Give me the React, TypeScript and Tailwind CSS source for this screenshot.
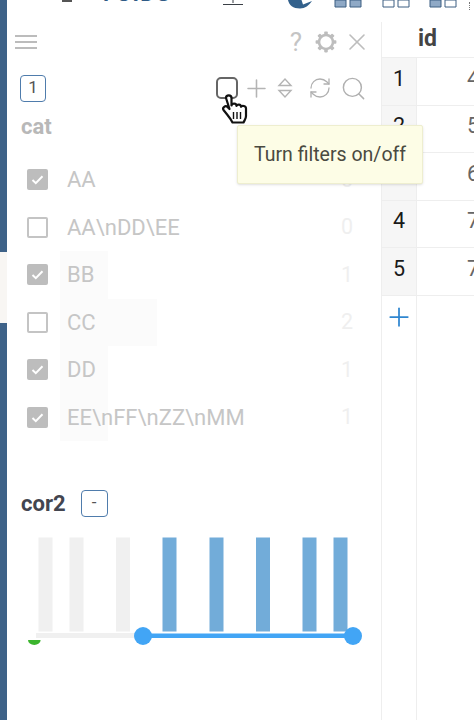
import { Plus, RefreshCw, Search, X } from 'lucide-react'

const filters = [
  { label: 'AA', count: '0', checked: true, bar: '' },
  { label: 'AA\\nDD\\EE', count: '0', checked: false, bar: '' },
  { label: 'BB', count: '1', checked: true, bar: 'w-[48px] bg-[#fbfbfb]' },
  { label: 'CC', count: '2', checked: false, bar: 'w-[97px] bg-[#fbfbfb]' },
  { label: 'DD', count: '1', checked: true, bar: 'w-[48px] bg-[#fbfbfb]' },
  { label: 'EE\\nFF\\nZZ\\nMM', count: '1', checked: true, bar: 'w-[48px] bg-[#fbfbfb]' },
]

const rows = [
  { id: 1, value: '4' },
  { id: 2, value: '5' },
  { id: 3, value: '6' },
  { id: 4, value: '7' },
  { id: 5, value: '7' },
]

function TopBar() {
  return (
    <div className="flex h-[22px] shrink-0 items-start overflow-hidden">
      <div className="ml-[55px] h-[2px] w-[10px] bg-[#555]" />
      <span className="ml-[31px] -mt-[16px] text-[22px] font-bold leading-[20px] tracking-[1.4px] text-[#2f5b86]">FUIDS</span>
      <svg className="ml-[52px]" width="20" height="6" viewBox="0 0 20 6">
        <path d="M10 0v3M0 4.5h20" stroke="#3a3f46" strokeWidth="1" fill="none" />
      </svg>
      <svg className="ml-[45px]" width="26" height="9" viewBox="0 0 26 9">
        <path d="M0 0c1 5 5 8.500 12 8.500 5 0 9-3 12-7.500l-9 3.500-1.500-4.500z" fill="#33618c" />
      </svg>
      <svg className="ml-[20px]" width="28" height="8" viewBox="0 0 28 8">
        <path d="M1 0h11v7H1zM16 0h11v7H16z" fill="#8fa9c6" stroke="#3d5f82" />
      </svg>
      <svg className="ml-[20px]" width="28" height="8" viewBox="0 0 28 8">
        <path d="M1 0h11v7H1zM16 0h11v7H16z" fill="none" stroke="#3d5f82" />
      </svg>
      <svg className="ml-[19px]" width="28" height="8" viewBox="0 0 28 8">
        <path d="M1 0h11v7H1z" fill="#8fa9c6" stroke="#3d5f82" />
        <path d="M16 0h11v7H16z" fill="none" stroke="#3d5f82" />
      </svg>
      <div className="ml-[12px] mt-[2px] h-[8px] w-[1px] border-l border-dotted border-[#777]" />
    </div>
  )
}

function Gear() {
  const teeth = [0, 45, 90, 135, 180, 225, 270, 315]
  return (
    <svg width="22" height="22" viewBox="0 0 22 22" className="ml-[13px] text-[#bdbdbd]">
      <circle cx="11" cy="11" r="7" fill="none" stroke="currentColor" strokeWidth="2.6" />
      {teeth.map((a) => (
        <rect key={a} x="9.2" y="0.6" width="3.6" height="3.6" rx="0.8" fill="currentColor" transform={`rotate(${a} 11 11)`} />
      ))}
    </svg>
  )
}

function FilterRow({ label, count, checked, bar }: (typeof filters)[number]) {
  return (
    <div className="flex h-[47.5px] items-center pl-[20px] pr-[28px]">
      {checked ? (
        <span className="flex h-[21px] w-[21px] shrink-0 items-center justify-center rounded-[2px] bg-[#bdbdbd]">
          <svg width="15" height="15" viewBox="0 0 15 15">
            <path d="M2.5 8l3.3 3.2 6.7-7" fill="none" stroke="#fff" strokeWidth="2" />
          </svg>
        </span>
      ) : (
        <span className="h-[21px] w-[21px] shrink-0 rounded-[2px] border-2 border-[#c4c4c4] bg-white" />
      )}
      <div className={`ml-[12px] flex h-full items-center pl-[7px] ${bar}`}>
        <span className="whitespace-nowrap text-[22px] text-[#c6c6c6]">{label}</span>
      </div>
      <span className="ml-auto text-[21.5px] text-[#efefef]">{count}</span>
    </div>
  )
}

function Histogram() {
  return (
    <svg width="345" height="112" viewBox="28 536 345 112" className="ml-[21px] block">
      {[38.5, 69.5, 116].map((x) => (
        <rect key={x} x={x} y="537.5" width="14" height="94" fill="#f0f0f0" />
      ))}
      {[162.5, 209.5, 256, 302.5, 333.5].map((x) => (
        <rect key={x} x={x} y="537.5" width="14" height="94" fill="#72acd9" />
      ))}
      <rect x="36" y="633" width="107" height="5" fill="#f0f0f0" />
      <rect x="143" y="633.5" width="210" height="4.5" fill="#42a5f5" />
      <circle cx="143" cy="636" r="9" fill="#42a5f5" />
      <circle cx="353" cy="636" r="9" fill="#42a5f5" />
      <path d="M28 640h12.6a6.3 5 0 0 1-12.6 0z" fill="#3cb52e" />
    </svg>
  )
}

function Sidebar() {
  return (
    <div className="flex w-[375px] shrink-0 flex-col border-r border-[#eeeeee]">
      <div className="flex h-[40px] shrink-0 items-center pl-[8px] pr-[10px]">
        <svg width="22" height="16" viewBox="0 0 22 16">
          <path d="M0 2h22M0 8h22M0 14h22" stroke="#bcbcbc" strokeWidth="2" fill="none" />
        </svg>
        <span className="ml-auto text-[26px] leading-none text-[#c4c4c4]">?</span>
        <Gear />
        <X size={28} strokeWidth={1.4} className="ml-[6px] text-[#bdbdbd]" />
      </div>

      <div className="flex h-[52px] shrink-0 items-center pl-[13px] pr-[14px]">
        <span className="flex h-[27px] w-[26px] items-center justify-center rounded-[4px] border border-[#4f7cac] text-[17px] text-[#555]">1</span>
        <span className="ml-auto h-[22px] w-[22px] rounded-[5px] border-2 border-[#666]" />
        <Plus size={29} strokeWidth={1.3} className="ml-[4px] text-[#b4b4b4]" />
        <svg className="ml-[6px]" width="16" height="24" viewBox="0 0 16 24">
          <path d="M2 9.5L8 3l6 6.5zM2 14.5L8 21l6-6.5z" fill="none" stroke="#b4b4b4" strokeWidth="1.4" />
        </svg>
        <RefreshCw size={24} strokeWidth={1.3} className="ml-[15px] text-[#b0b0b0]" />
        <Search size={27} strokeWidth={1.3} className="ml-[8px] text-[#b0b0b0]" />
      </div>

      <div className="h-[26px] shrink-0 pl-[14px] text-[22px] font-bold leading-[26px] text-[#b8b8b8]">cat</div>

      <div className="mt-[16px] shrink-0">
        {filters.map((f) => (
          <FilterRow key={f.label} {...f} />
        ))}
      </div>

      <div className="mt-[49px] flex h-[26px] shrink-0 items-center pl-[14px]">
        <span className="text-[22px] font-bold text-[#43454f]">cor2</span>
        <span className="ml-[15px] flex h-[27px] w-[27px] items-center justify-center rounded-[4px] border border-[#4f7cac] text-[17px] text-[#555]">-</span>
      </div>

      <div className="mt-[20px]">
        <Histogram />
      </div>
    </div>
  )
}

function DataTable() {
  return (
    <div className="flex min-w-0 flex-1 flex-col overflow-hidden">
      <div className="flex h-[35px] shrink-0 items-center pl-[36px] text-[23px] font-bold text-[#444]">id</div>
      {rows.map((r) => (
        <div key={r.id} className="flex h-[47.5px] shrink-0 border-t border-[#eeeeee]">
          <div className="flex w-[35px] shrink-0 items-center justify-center border-r border-[#eeeeee] bg-[#f6f6f6] pb-[5px] text-[21.5px] text-[#1a1a1a]">
            {r.id}
          </div>
          <div className="flex flex-1 items-center pb-[5px] pl-[50px] text-[21.5px] text-[#666]">{r.value}</div>
        </div>
      ))}
      <div className="flex flex-1 border-t border-[#eeeeee]">
        <div className="flex w-[35px] shrink-0 justify-center border-r border-[#eeeeee] pt-[6px]">
          <Plus size={30} strokeWidth={1.4} className="text-[#2f86d0]" />
        </div>
      </div>
    </div>
  )
}

export default function App() {
  return (
    <div className="relative flex h-[720px] w-[474px] overflow-hidden bg-white font-['Roboto',sans-serif]">
      <div className="flex w-[7px] shrink-0 flex-col">
        <div className="h-[252px] bg-[#3e6288]" />
        <div className="h-[71px] bg-[#f8f6f3]" />
        <div className="flex-1 bg-[#3e6288]" />
      </div>

      <div className="flex min-w-0 flex-1 flex-col">
        <TopBar />
        <div className="flex min-h-0 flex-1">
          <Sidebar />
          <DataTable />
        </div>
      </div>

      {/* tooltip and pointer sit over the panels */}
      <div className="absolute left-[237px] top-[125px] flex h-[59px] w-[186px] items-center rounded-[2px] border border-[#eeeecf] bg-[#fdfde6] pl-[16px] text-[19.5px] text-[#4a4a40] shadow-sm">
        Turn filters on/off
      </div>
      <svg className="absolute left-[218px] top-[92px]" width="34" height="36" viewBox="218 92 34 36">
        <path
          d="M226 98c0-3.500 5.500-3.500 5.500 0v7.500c.5-2.500 5-2.500 5 .5 .5-2 4.500-2 4.500 .8 1-1.800 5-1 5 1.700v7.500c0 3-1.500 4-2.500 6.500h-11c-1.500-3-3-5-5-7.500l-4-5c-1.500-2.500 2-5 4-3l2 2z"
          fill="#fff"
          stroke="#111"
          strokeWidth="2.2"
          strokeLinejoin="round"
        />
        <path d="M233.500 112v7M237 112v7M240.500 112v7" stroke="#111" strokeWidth="1.4" fill="none" />
      </svg>
    </div>
  )
}
